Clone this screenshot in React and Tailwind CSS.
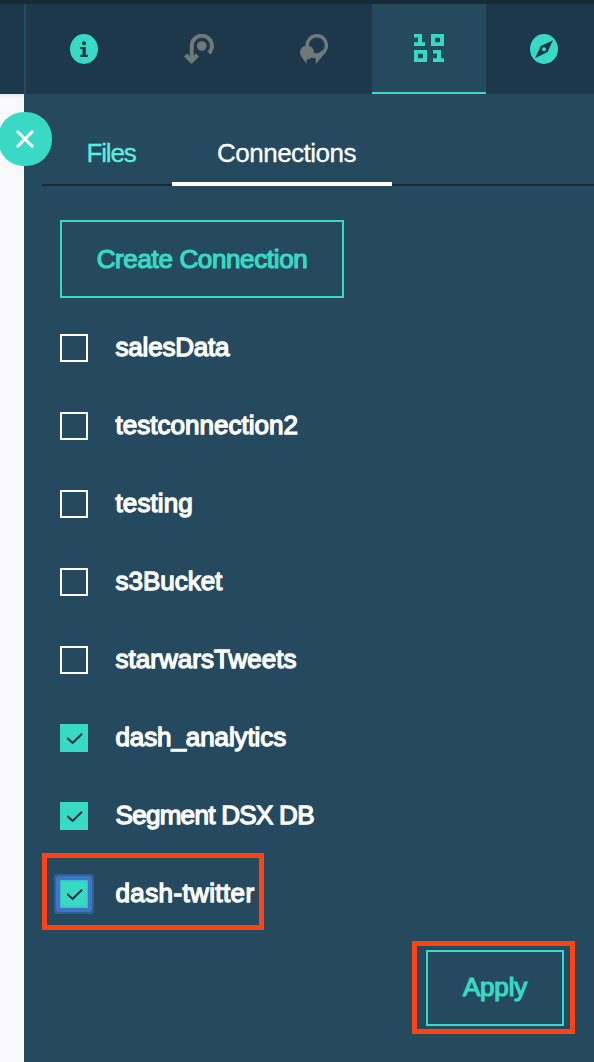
import React, { useState } from 'react';

const CONNECTIONS = [
  { name: 'salesData', checked: false, tracking: 'tracking-[-0.2px]' },
  { name: 'testconnection2', checked: false, tracking: 'tracking-[0.03px]' },
  { name: 'testing', checked: false, tracking: 'tracking-[0.1px]' },
  { name: 's3Bucket', checked: false, tracking: 'tracking-[-0.02px]' },
  { name: 'starwarsTweets', checked: false, tracking: 'tracking-[0.04px]' },
  { name: 'dash_analytics', checked: true, tracking: 'tracking-[-0.1px]' },
  { name: 'Segment DSX DB', checked: true, tracking: 'tracking-[-0.7px]' },
  { name: 'dash-twitter', checked: true, focused: true, tracking: 'tracking-[0.38px]' },
];

const InfoIcon = () => (
  <svg width="28" height="30" viewBox="0 0 28 30">
    <ellipse cx="14" cy="15" rx="14" ry="15" fill="#38d9c5" />
    <circle cx="14" cy="9.3" r="2" fill="#1e384b" />
    <path d="M10.3 13H15.8V20.8H17.8V23H10.3V20.8H12.5V15H10.3Z" fill="#1e384b" />
  </svg>
);

const UndoIcon = () => (
  <svg width="30" height="30" viewBox="0 0 30 30" fill="#717878">
    <circle cx="17.8" cy="12" r="4.8" />
    <path d="M7.7 26V11.8A10.1 10.1 0 0 1 27.9 11.8Q27.9 16 25 19.2" fill="none" stroke="#717878" strokeWidth="4" />
    <path d="M0 22.4L3 19.4L7.5 23.4L12 19.4L15 22.4L7.5 30Z" />
  </svg>
);

const CommentsIcon = () => (
  <svg width="28" height="30" viewBox="0 0 28 30" fill="#717878">
    <circle cx="16.8" cy="11.3" r="9.6" fill="none" stroke="#717878" strokeWidth="3.4" />
    <circle cx="7" cy="18.4" r="7" />
    <path d="M0.6 21.5L6.6 30V25.2L9 24.8L13 21.5Z" />
    <path d="M12 23.5L13.5 24.3H15.8V30L26.8 17L22 16.5L17 20.8L13 20.5Z" />
  </svg>
);

const DataIcon = () => (
  <svg width="30" height="28" viewBox="0 0 30 28" fill="#38d9c5">
    <path d="M0 0H8V8.3H11V12H0V8.3H4V3.6H0Z" />
    <path fillRule="evenodd" d="M17 0H30V12H17ZM21 3.7V8.3H26V3.7Z" />
    <path fillRule="evenodd" d="M0 16H13V28H0ZM4 19.7V24.3H9V19.7Z" />
    <path d="M19 16H27V24.3H30V28H19V24.3H23V19.6H19Z" />
  </svg>
);

const CompassIcon = () => (
  <svg width="28" height="30" viewBox="0 0 28 30">
    <ellipse cx="14" cy="15" rx="14" ry="15" fill="#38d9c5" />
    <path d="M23 6.3L17.5 18L5 24.3L10.8 12Z" fill="#1e384b" />
    <circle cx="14" cy="15.2" r="2" fill="#38d9c5" />
  </svg>
);

const TOOLS = [
  { id: 'info', icon: InfoIcon },
  { id: 'versions', icon: UndoIcon },
  { id: 'comments', icon: CommentsIcon },
  { id: 'data', icon: DataIcon },
  { id: 'explore', icon: CompassIcon },
];

function Checkbox({ checked, focused }) {
  if (!checked) {
    return <span className="h-7 w-7 shrink-0 border-2 border-white" />;
  }
  return (
    <span
      className={`flex h-7 w-7 shrink-0 items-center justify-center bg-[#38d9c5] ${focused
        ? 'rounded-[1px] shadow-[inset_0_0_2px_1px_#3bb8cf,0_0_0_4px_#3d76c6,0_0_0_6px_#30608f]'
        : ''
        }`}
    >
      <svg width="28" height="28" viewBox="0 0 28 28" fill="none" stroke="#152935" strokeWidth="1.9">
        <path d="M7.3 14L12.6 19L22 9.7" />
      </svg>
    </span>
  );
}

function App() {
  const [activeTool, setActiveTool] = useState('data');
  const [items, setItems] = useState(CONNECTIONS);

  const toggle = (name) => {
    setItems(items.map((item) => (item.name === name ? { ...item, checked: !item.checked } : item)));
  };

  return (
    <div className="flex h-[1062px] w-[594px] flex-col overflow-hidden bg-[#254a60] font-['Liberation_Sans',Arial,sans-serif] text-[26px] leading-[30px] text-white">
      {/* Toolbar */}
      <header className="flex h-[94px] shrink-0 border-t-4 border-[#172b38] bg-[#1e384b]">
        <div className="w-[26px] shrink-0 border-r-2 border-[#254a60]" />
        <nav className="flex shrink-0 gap-px pl-px">
          {TOOLS.map(({ id, icon: Icon }) => (
            <button
              key={id}
              onClick={() => setActiveTool(id)}
              className={`flex h-[90px] w-[114px] items-start justify-center border-b-2 pt-[30px] ${activeTool === id
                ? 'border-[#38d9c5] bg-[#254a60]'
                : 'border-transparent'
                }`}
            >
              <Icon />
            </button>
          ))}
        </nav>
      </header>

      <div className="flex flex-1">
        {/* Edge of the notebook behind the panel */}
        <div className="relative w-6 shrink-0 bg-linear-to-b from-[#e9e9ec] to-[#f9f9fb] to-[5px]">
          <button className="absolute top-[18px] -left-[2px] flex h-[54px] w-[54px] items-center justify-center rounded-[26px] bg-[#38d9c5]">
            <svg width="18" height="18" viewBox="0 0 18 18" stroke="white" strokeWidth="3" strokeLinecap="round">
              <path d="M1.8 1.8L16.2 16.2M16.2 1.8L1.8 16.2" />
            </svg>
          </button>
        </div>

        <main className="flex flex-1 flex-col pl-[18px]">
          {/* Tabs */}
          <div className="flex h-[92px] items-stretch border-b-2 border-[#172b38]">
            <button className="w-[130px] pt-[27px] pl-2 text-center tracking-[-1.2px] text-[#5feddb] [-webkit-text-stroke:0.3px]">Files</button>
            <button className="-mb-[2px] w-[220px] border-b-4 border-white pt-[29px] pl-[9px] text-center tracking-[-0.5px] [-webkit-text-stroke:0.3px]">Connections</button>
          </div>

          <div className="flex flex-col pt-[34px] pl-[18px]">
            <button className="h-[78px] w-[284px] border-2 border-[#38d9c5] tracking-[-0.36px] text-[#38d9c5] [-webkit-text-stroke:1.2px]">
              Create Connection
            </button>

            <ul className="mt-[11px]">
              {items.map(({ name, checked, focused, tracking }) => (
                <li key={name} className="relative flex h-[78px] items-center">
                  <label onClick={() => toggle(name)} className="flex items-center gap-[27.5px]">
                    <Checkbox checked={checked} focused={focused} />
                    <span className={`pb-[2px] whitespace-nowrap [-webkit-text-stroke:1.3px] ${tracking}`}>{name}</span>
                  </label>
                  {focused && (
                    <div className="pointer-events-none absolute top-[-2px] -left-[18px] h-[77px] w-[222px] border-5 border-[#ff4314]" />
                  )}
                </li>
              ))}
            </ul>
          </div>

          <div className="mt-2 mr-[19px] self-end border-5 border-[#ff4314] pt-1 pr-[6px] pb-[3px] pl-[9px]">
            <button className="h-[76px] w-[138px] border-2 border-[#38d9c5] pb-[2px] tracking-[-0.2px] text-[#38d9c5] [-webkit-text-stroke:1.2px]">
              Apply
            </button>
          </div>
        </main>
      </div>
    </div>
  );
}

export default App;
